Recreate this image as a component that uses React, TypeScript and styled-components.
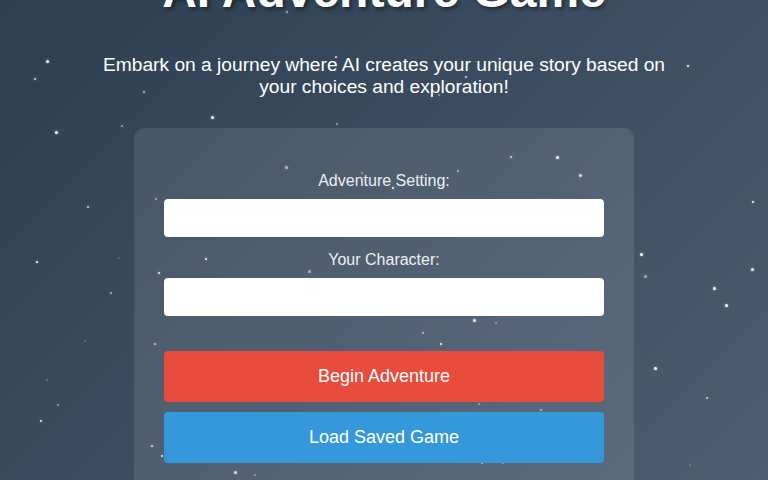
import React from "react";
import styled, { createGlobalStyle } from "styled-components";

const GlobalStyle = createGlobalStyle`
  html, body { margin: 0; padding: 0; }
  body { font-family: "Liberation Sans", Arial, sans-serif; }
  * { box-sizing: border-box; }
`;

const Page = styled.div`
  position: relative;
  height: 100vh;
  overflow: hidden;
  display: flex;
  flex-direction: column;
  align-items: center;
  justify-content: center;
  background: linear-gradient(135deg, #2c3e50 0%, #4c5d72 100%);
  color: #fff;
`;

const Sky = styled.div`
  position: absolute;
  inset: 0;
  pointer-events: none;
`;

const Star = styled.span<{ $size: number; $alpha: number }>`
  position: absolute;
  width: ${(p) => p.$size}px;
  height: ${(p) => p.$size}px;
  margin: ${(p) => -p.$size / 2}px 0 0 ${(p) => -p.$size / 2}px;
  border-radius: 50%;
  background: #fff;
  opacity: ${(p) => p.$alpha};
  box-shadow: 0 0 3px rgba(255, 255, 255, 0.6);
`;

const Title = styled.h1`
  position: relative;
  margin: 0 0 35px;
  font-size: 48px;
  line-height: 56px;
  font-weight: 700;
  text-align: center;
  color: #fff;
  text-shadow: 2px 2px 4px rgba(0, 0, 0, 0.5);
  flex-shrink: 0;
`;

const Subtitle = styled.p`
  position: relative;
  margin: 0 0 30px;
  max-width: 600px;
  font-size: 19.2px;
  line-height: 22px;
  text-align: center;
  color: #fff;
  flex-shrink: 0;
`;

const Card = styled.div`
  position: relative;
  width: 500px;
  flex-shrink: 0;
  padding: 44px 30px 45px;
  border-radius: 10px;
  background: rgba(255, 255, 255, 0.1);
`;

const Field = styled.div`
  margin-bottom: 14px;
  &:last-of-type { margin-bottom: 35px; }
`;

const Label = styled.label`
  display: block;
  margin-bottom: 9px;
  font-size: 16px;
  line-height: 18px;
  text-align: center;
  color: #ecf0f1;
`;

const Input = styled.input`
  display: block;
  width: 100%;
  height: 38px;
  padding: 10px 12px;
  border: none;
  border-radius: 4px;
  background: #fff;
  font-family: inherit;
  font-size: 16px;
  outline: none;
`;

const Button = styled.button<{ $tone: "red" | "blue" }>`
  display: block;
  width: 100%;
  height: 51px;
  margin-bottom: 10px;
  padding: 15px;
  border: none;
  border-radius: 4px;
  background: ${(p) => (p.$tone === "red" ? "#e74c3c" : "#3498db")};
  color: #fff;
  font-family: inherit;
  font-size: 18px;
  line-height: 21px;
  cursor: pointer;
`;

const stars: [number, number, number, number][] = [
  [47, 61, 3, 1], [35, 79, 2, 0.8], [144, 92, 1.5, 0.6], [161, 62, 2, 0.9],
  [336, 57, 2, 0.8], [466, 77, 2, 0.8], [688, 66, 2.5, 1], [287, 12, 2, 0.6],
  [212, 117, 3, 1], [56, 132, 3, 1], [122, 126, 2, 0.5], [88, 207, 2.5, 0.8],
  [37, 262, 2.5, 1], [111, 293, 2.5, 0.6], [119, 258, 2, 0.2], [85, 341, 2, 0.2],
  [47, 380, 2, 0.25], [58, 405, 2, 0.5], [41, 421, 2, 0.9], [753, 202, 1.5, 0.9],
  [641, 254, 3, 1], [645, 276, 3, 0.5], [752, 269, 3, 0.9], [714, 288, 3, 1],
  [726, 305, 3, 1], [655, 368, 3, 1], [707, 398, 2, 0.7], [690, 465, 2, 0.2],
  [337, 124, 2, 0.5], [286, 167, 3, 0.6], [362, 173, 2, 0.4], [393, 188, 2.5, 1],
  [458, 171, 2, 0.6], [511, 157, 2, 0.8], [557, 157, 3, 1], [580, 175, 3, 0.8],
  [156, 199, 2, 0.5], [206, 259, 2.5, 1], [159, 273, 2, 0.9], [309, 271, 3, 0.5],
  [474, 320, 3, 0.9], [496, 323, 2.5, 0.4], [423, 333, 2, 0.6], [441, 344, 2.5, 0.9],
  [155, 344, 2.5, 0.7], [479, 404, 2, 0.4], [541, 410, 2.5, 0.5], [152, 446, 2.5, 0.8],
  [162, 456, 2, 0.9], [235, 472, 3, 0.8], [255, 475, 2, 0.4], [482, 463, 2, 0.6],
  [503, 463, 2, 0.4], [439, 95, 1.5, 0.4],
];

export default function App() {
  return (
    <>
      <GlobalStyle />
      <Page>
        <Sky>
          {stars.map(([x, y, s, a], i) => (
            <Star key={i} $size={s} $alpha={a} style={{ left: x, top: y }} />
          ))}
        </Sky>
        <Title>AI Adventure Game</Title>
        <Subtitle>
          Embark on a journey where AI creates your unique story based on your choices and exploration!
        </Subtitle>
        <Card>
          <Field>
            <Label htmlFor="setting">Adventure Setting:</Label>
            <Input id="setting" type="text" />
          </Field>
          <Field>
            <Label htmlFor="character">Your Character:</Label>
            <Input id="character" type="text" />
          </Field>
          <Button $tone="red">Begin Adventure</Button>
          <Button $tone="blue">Load Saved Game</Button>
        </Card>
      </Page>
    </>
  );
}
